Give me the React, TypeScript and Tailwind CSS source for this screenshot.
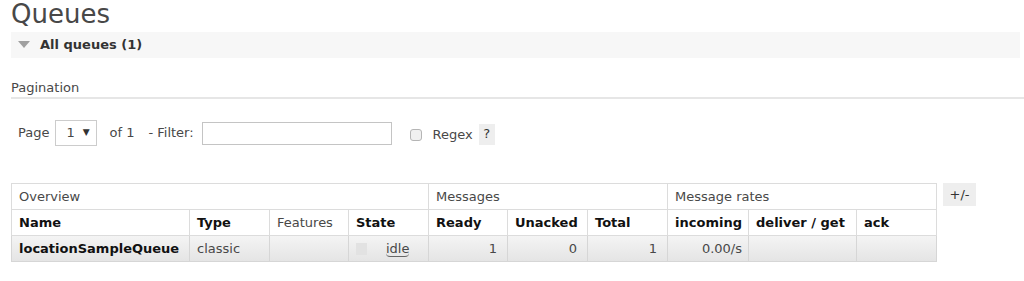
const font = "font-['DejaVu_Sans','Verdana',sans-serif]";

const cols = [
  { label: "Name", w: "w-[178px]" },
  { label: "Type", w: "w-[80px]" },
  { label: "Features", w: "w-[79px]", normal: true },
  { label: "State", w: "w-[80px]" },
  { label: "Ready", w: "w-[79px]" },
  { label: "Unacked", w: "w-[80px]" },
  { label: "Total", w: "w-[80px]" },
  { label: "incoming", w: "w-[81px]" },
  { label: "deliver / get", w: "w-[108px]" },
  { label: "ack", w: "w-[80px]" },
];

const cell = "border border-[#dcdcdc] px-[7px] h-[26px] text-left align-middle whitespace-nowrap";
const dataCell = "border border-[#d6d6d6] px-[7px] h-[26px] align-middle whitespace-nowrap";

export default function App() {
  return (
    <div className={`${font} min-h-screen bg-white text-[13px] text-[#484848] pl-[11px] pt-0`}>
      {/* Title */}
      <h1 className="text-[26px] leading-[28px] font-normal text-[#484848]">Queues</h1>

      {/* Section header */}
      <div className="mt-[4px] h-[26px] w-[1009px] bg-[#f7f7f7] flex items-center">
        <svg className="ml-[7px] w-[12px] h-[8px]" viewBox="0 0 12 8">
          <path d="M0 0 L12 0 L6 7 Z" fill="#a0a0a0" />
        </svg>
        <span className="ml-[10px] font-bold text-[#333]">All queues (1)</span>
      </div>

      {/* Pagination */}
      <div className="mt-[22px] w-[1013px] border-b-2 border-[#e6e6e6] pb-[1px]">
        <div className="leading-[16px] text-[#484848]">Pagination</div>
      </div>

      <div className="mt-[21px] flex items-center h-[26px] pl-[7px]">
        <span>Page</span>
        <div className="ml-[6px] w-[42px] h-[26px] border border-[#cccccc] bg-white flex items-center">
          <span className="ml-[10px]">1</span>
          <span className="ml-[8px] text-[9px] text-[#333]">▼</span>
        </div>
        <span className="ml-[12px]">of 1</span>
        <span className="ml-[14px]">- Filter:</span>
        <div className="ml-[8px] w-[190px] h-[23px] border border-[#c4c4c4] bg-white" />
        <div className="ml-[18px] mt-[4px] w-[12px] h-[12px] rounded-[3px] border border-[#b5b5b5] bg-[#f0f0f0]" />
        <span className="ml-[11px] mt-[4px]">Regex</span>
        <span className="ml-[6px] mt-[2px] w-[16px] h-[21px] bg-[#eeeeee] flex items-center justify-center text-[#333]">?</span>
      </div>

      {/* Table */}
      <div className="mt-[37px] flex items-start">
        <table className="table-fixed border-collapse w-[925px]">
          <colgroup>
            {cols.map((c) => (
              <col key={c.label} className={c.w} />
            ))}
          </colgroup>
          <thead>
            <tr>
              <th colSpan={4} className={`${cell} font-normal`}>Overview</th>
              <th colSpan={3} className={`${cell} font-normal`}>Messages</th>
              <th colSpan={3} className={`${cell} font-normal`}>Message rates</th>
            </tr>
            <tr>
              {cols.map((c) => (
                <th
                  key={c.label}
                  className={`${cell} ${c.normal ? "font-normal text-[#484848]" : "font-bold text-[#111]"}`}
                >
                  {c.label}
                </th>
              ))}
            </tr>
          </thead>
          <tbody>
            <tr className="bg-gradient-to-b from-[#f4f4f4] to-[#e4e4e4]">
              <td className={`${dataCell} font-bold text-[#111]`}>locationSampleQueue</td>
              <td className={dataCell}>classic</td>
              <td className={dataCell}></td>
              <td className={dataCell}>
                <div className="flex items-center">
                  <span className="w-[11px] h-[12px] bg-[#e2e2e2]" />
                  <span className="ml-[19px] border-b border-[#666] rounded-b-[4px] leading-[15px]">idle</span>
                </div>
              </td>
              <td className={`${dataCell} text-right pr-[10px]`}>1</td>
              <td className={`${dataCell} text-right pr-[10px]`}>0</td>
              <td className={`${dataCell} text-right pr-[10px]`}>1</td>
              <td className={`${dataCell} text-right pr-[6px]`}>0.00/s</td>
              <td className={dataCell}></td>
              <td className={dataCell}></td>
            </tr>
          </tbody>
        </table>
        <div className="ml-[6px] w-[33px] h-[23px] bg-[#eeeeee] flex items-center justify-center text-[#333]">+/-</div>
      </div>
    </div>
  );
}
